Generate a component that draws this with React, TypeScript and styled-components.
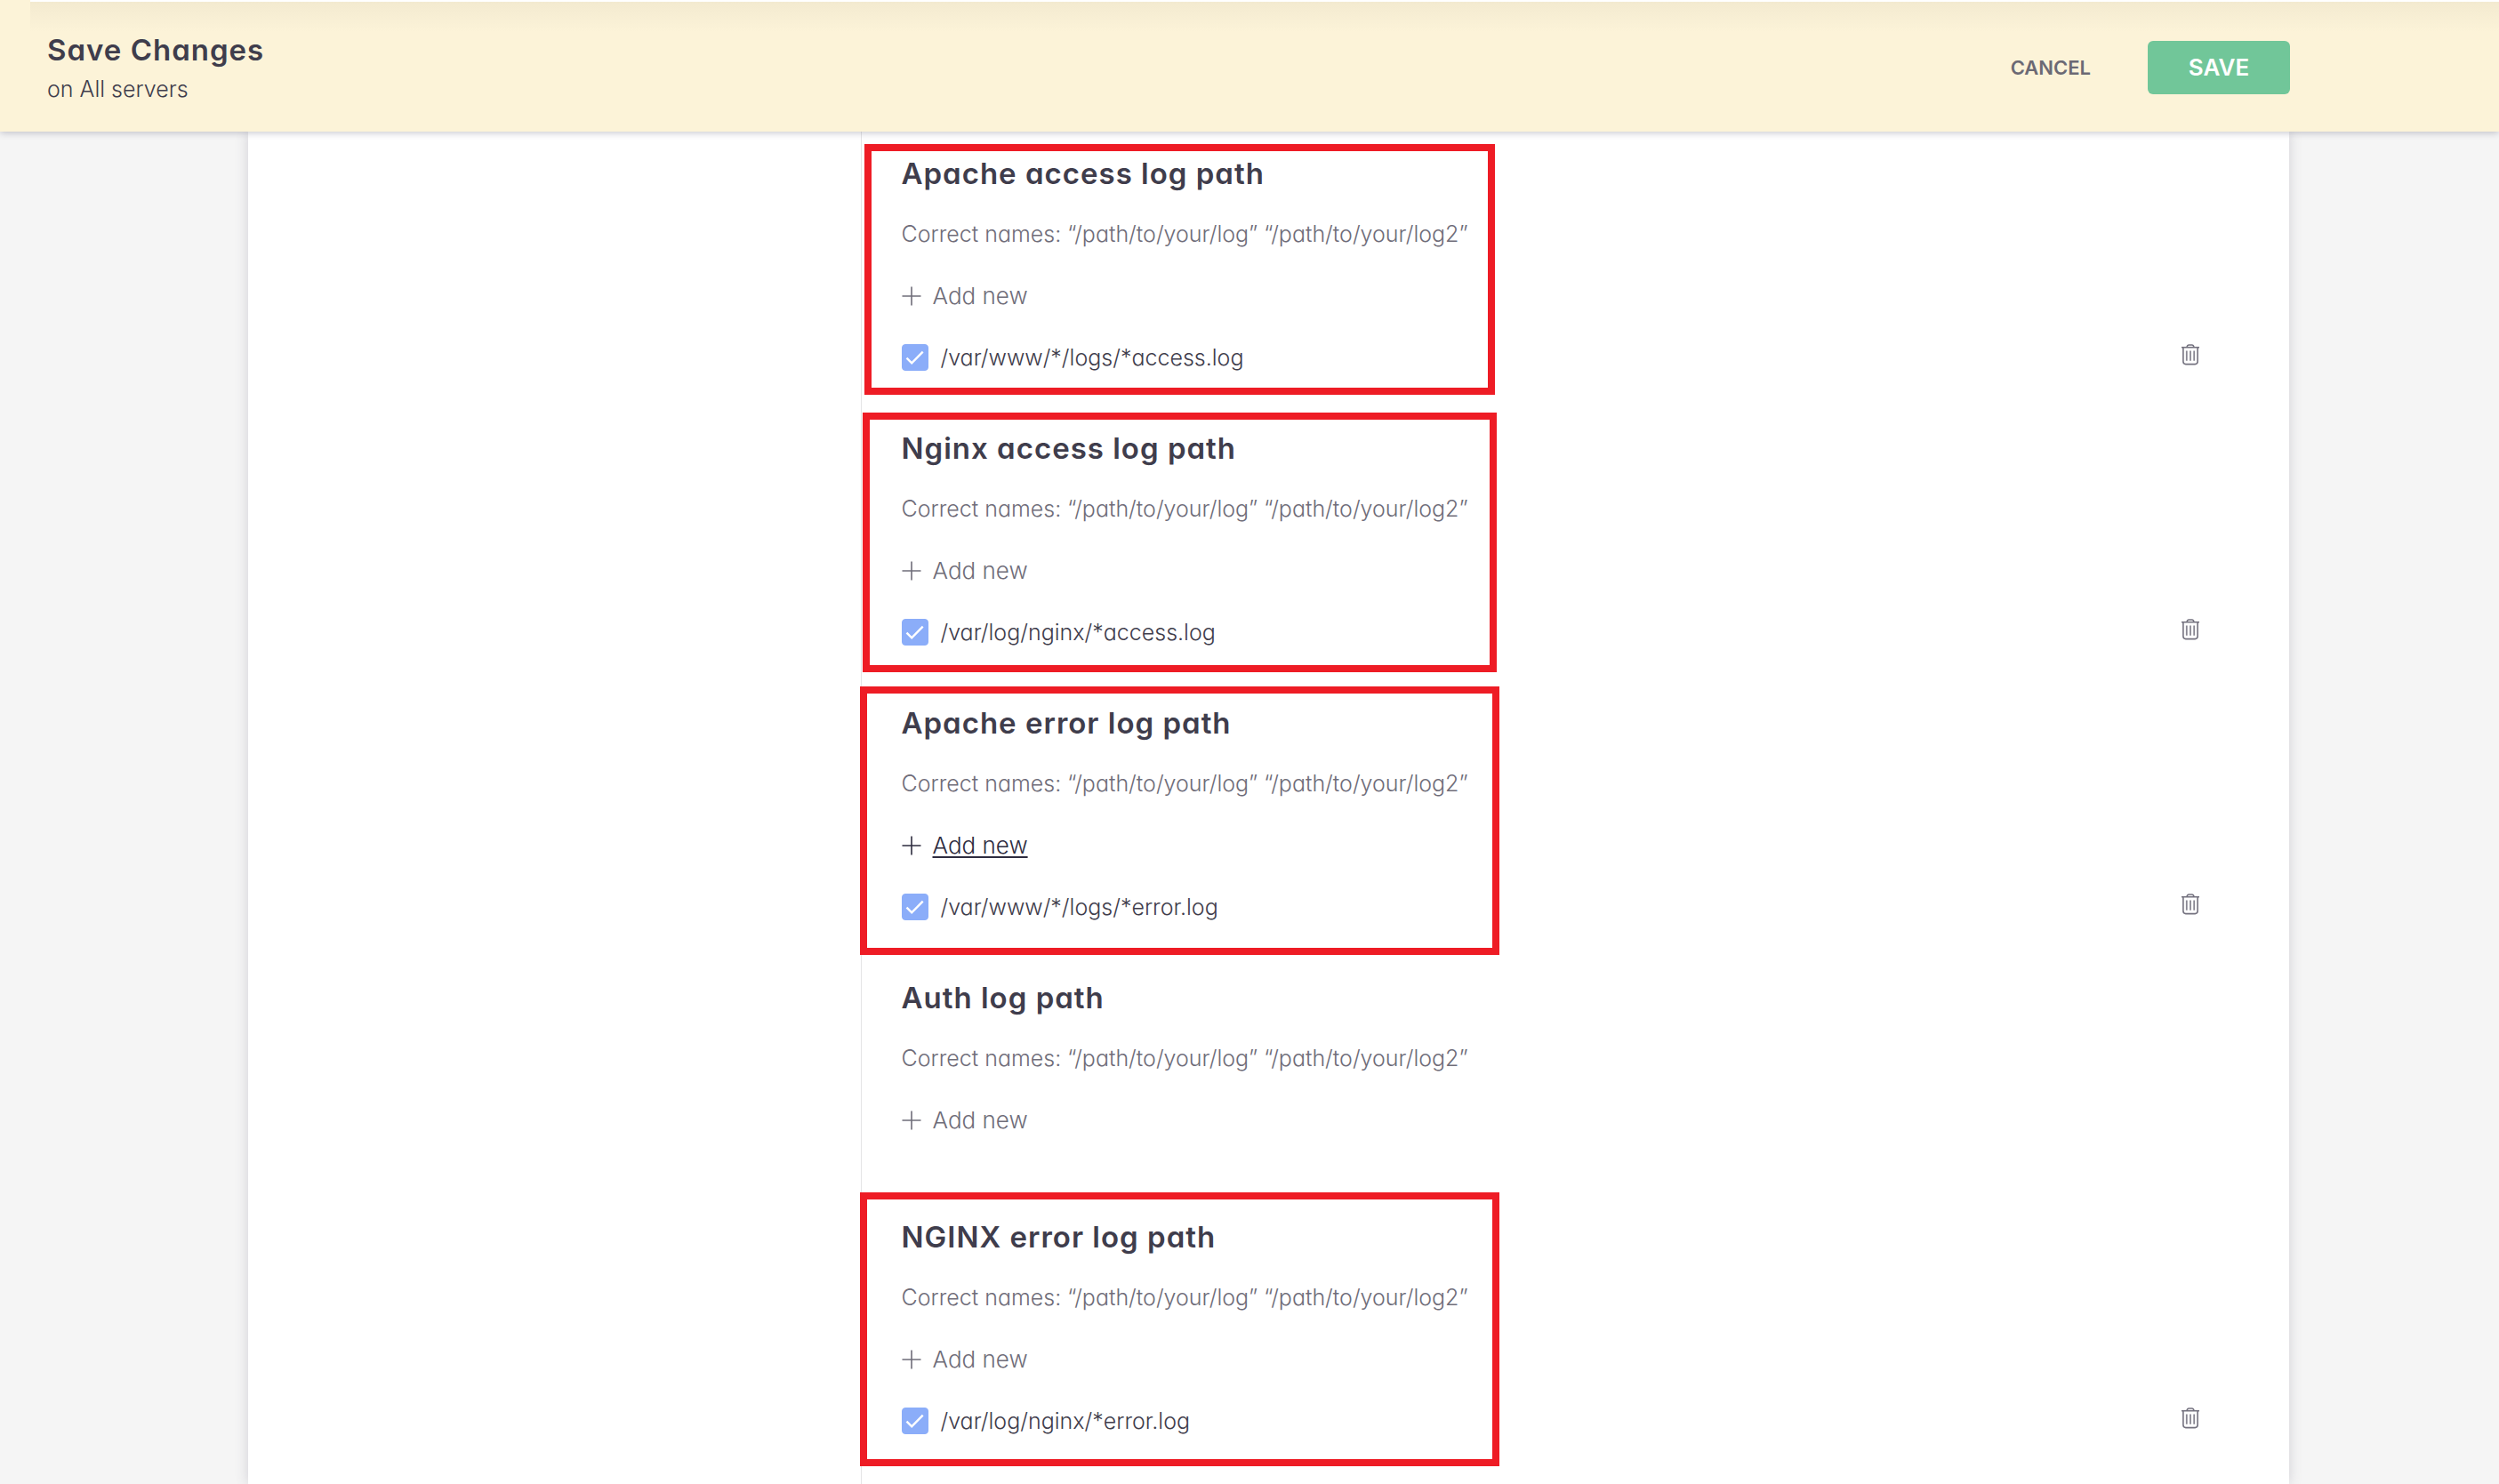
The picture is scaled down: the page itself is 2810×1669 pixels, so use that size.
import React, { useState } from 'react';
import styled, { createGlobalStyle } from 'styled-components';

const GlobalStyle = createGlobalStyle`
  *, *::before, *::after {
    box-sizing: border-box;
  }

  body {
    margin: 0;
    background: #f5f5f5;
    color: #3f3d4c;
    font-family: Inter, 'Open Sans', sans-serif;
    font-size: 25px;
    font-weight: 350;
    line-height: 32px;
    font-feature-settings: 'cv11';
  }

  button {
    padding: 0;
    border: 0;
    background: none;
    font: inherit;
    font-feature-settings: inherit;
    cursor: pointer;
  }
`;

const Page = styled.div`
  display: flex;
  flex-direction: column;
  min-height: 100vh;
`;

const Header = styled.header`
  position: relative;
  z-index: 1;
  display: flex;
  justify-content: space-between;
  align-items: flex-start;
  padding: 36px 235px 32px 53px;
  background: #fcf3d8;
  box-shadow: 0 1px 8px rgba(63, 61, 90, 0.32);

  &::before {
    content: '';
    position: absolute;
    top: 0;
    right: 0;
    left: 34px;
    height: 36px;
    border-top: 2px solid #fff;
    background: linear-gradient(#f3ead0, #fcf3d8);
  }
`;

const HeaderText = styled.div`
  position: relative;
  display: grid;
  gap: 8px;
`;

const HeaderTitle = styled.h1`
  margin: 0;
  font-size: 33px;
  font-weight: 600;
  line-height: 40px;
  letter-spacing: 1px;
`;

const HeaderNote = styled.p`
  margin: 0;
`;

const Actions = styled.div`
  display: flex;
  align-items: center;
  gap: 64px;
  margin-top: 10px;
`;

const CancelButton = styled.button`
  color: #6b6974;
  font-size: 22px;
  font-weight: 600;
`;

const SaveButton = styled.button`
  width: 160px;
  height: 60px;
  border-radius: 6px;
  background: #71c699;
  color: #fff;
  font-size: 26px;
  font-weight: 600;
`;

const Body = styled.div`
  display: flex;
  flex: 1;
  padding: 0 236px 0 279px;
`;

const Card = styled.div`
  display: grid;
  flex: 1;
  grid-template-columns: 30% 1fr;
  background: #fff;
  box-shadow: 0 0 14px rgba(63, 61, 90, 0.2);
`;

const Settings = styled.main`
  grid-column: 2;
  padding: 27px 101px 0 45px;
  border-left: 1px solid #e4e4e6;
`;

const Section = styled.section`
  position: relative;
  padding-bottom: 66px;

  &:last-child {
    padding-bottom: 40px;
  }
`;

const SectionTitle = styled.h2`
  margin: 0 0 32px;
  font-size: 33px;
  font-weight: 600;
  line-height: 40px;
  letter-spacing: 1px;
`;

const Hint = styled.p`
  margin: 0 0 38px;
  color: #6f6d79;
`;

const AddButton = styled.button<{ $active?: boolean }>`
  display: flex;
  align-items: center;
  gap: 13px;
  color: ${({ $active }) => ($active ? '#2e2c3f' : '#6f6d79')};
  font-size: 26px;

  span {
    text-decoration: ${({ $active }) => ($active ? 'underline' : 'none')};
    text-decoration-thickness: 2px;
    text-underline-offset: 3px;
    text-decoration-skip-ink: none;
  }
`;

const PathList = styled.ul`
  min-height: 29px;
  margin: 0;
  padding: 0;
  list-style: none;
`;

const PathRow = styled.li`
  display: flex;
  justify-content: space-between;
  align-items: flex-start;
  padding-top: 37px;
`;

const PathLabel = styled.label`
  display: flex;
  align-items: center;
  gap: 14px;
`;

const CheckboxCell = styled.span`
  display: grid;

  > * {
    grid-area: 1 / 1;
  }

  svg {
    pointer-events: none;
  }
`;

const Checkbox = styled.input`
  appearance: none;
  width: 30px;
  height: 30px;
  margin: 0;
  border: 1px solid #8badf9;
  border-radius: 4px;

  &:checked {
    background: #8badf9;
  }
`;

const DeleteButton = styled.button`
  display: flex;
  padding-top: 1px;
  color: #74727f;
`;

const Frame = styled.div<{ $top: number; $left: number; $width: number; $height: number }>`
  position: absolute;
  top: ${({ $top }) => $top}px;
  left: ${({ $left }) => $left}px;
  width: ${({ $width }) => $width}px;
  height: ${({ $height }) => $height}px;
  border: 8px solid #ee1c25;
  pointer-events: none;
`;

const PlusIcon = () => (
  <svg width="22" height="22" viewBox="0 0 22 22" fill="none" stroke="currentColor" strokeWidth="1.6" aria-hidden="true">
    <path d="M11 0.5V21.5M0.5 11H21.5" />
  </svg>
);

const CheckIcon = () => (
  <svg width="30" height="30" viewBox="0 0 30 30" fill="none" stroke="#fff" strokeWidth="2.4" aria-hidden="true">
    <path d="M5.5 15.7L11.2 21.3L23.7 8.7" />
  </svg>
);

const TrashIcon = () => (
  <svg width="20" height="24" viewBox="0 0 20 24" fill="none" stroke="currentColor" aria-hidden="true">
    <path d="M0 3.7H20" strokeWidth="1.6" />
    <path d="M6 3.5C6.4 1.4 7 0.9 8.2 0.9H11.8C13 0.9 13.6 1.4 14 3.5" strokeWidth="1.5" />
    <path d="M1.9 4V19.6C1.9 21.7 2.9 22.6 4.8 22.6H15.2C17.1 22.6 18.1 21.7 18.1 19.6V4" strokeWidth="1.6" />
    <path d="M5.8 7.5V18.8M10 7.5V18.8M14.2 7.5V18.8" strokeWidth="1.8" opacity="0.85" />
  </svg>
);

type FrameBox = { top: number; left: number; width: number; height: number };
type LogSection = { title: string; paths: string[]; active?: boolean; frame?: FrameBox };

const sections: LogSection[] = [
  {
    title: 'Apache access log path',
    paths: ['/var/www/*/logs/*access.log'],
    frame: { top: -13, left: -42, width: 709, height: 282 },
  },
  {
    title: 'Nginx access log path',
    paths: ['/var/log/nginx/*access.log'],
    frame: { top: -20, left: -44, width: 713, height: 292 },
  },
  {
    title: 'Apache error log path',
    paths: ['/var/www/*/logs/*error.log'],
    active: true,
    frame: { top: -21, left: -47, width: 719, height: 302 },
  },
  { title: 'Auth log path', paths: [] },
  {
    title: 'NGINX error log path',
    paths: ['/var/log/nginx/*error.log'],
    frame: { top: -30, left: -47, width: 719, height: 308 },
  },
];

function LogPath({ path }: { path: string }) {
  const [checked, setChecked] = useState(true);
  return (
    <PathRow>
      <PathLabel>
        <CheckboxCell>
          <Checkbox type="checkbox" checked={checked} onChange={(e) => setChecked(e.target.checked)} />
          {checked && <CheckIcon />}
        </CheckboxCell>
        {path}
      </PathLabel>
      <DeleteButton type="button" aria-label={`Delete ${path}`}>
        <TrashIcon />
      </DeleteButton>
    </PathRow>
  );
}

export default function App() {
  return (
    <Page>
      <GlobalStyle />
      <Header>
        <HeaderText>
          <HeaderTitle>Save Changes</HeaderTitle>
          <HeaderNote>on All servers</HeaderNote>
        </HeaderText>
        <Actions>
          <CancelButton type="button">CANCEL</CancelButton>
          <SaveButton type="button">SAVE</SaveButton>
        </Actions>
      </Header>
      <Body>
        <Card>
          <Settings>
            {sections.map(({ title, paths, active, frame }) => (
              <Section key={title}>
                <SectionTitle>{title}</SectionTitle>
                <Hint>Correct names: “/path/to/your/log” “/path/to/your/log2”</Hint>
                <AddButton type="button" $active={active}>
                  <PlusIcon />
                  <span>Add new</span>
                </AddButton>
                <PathList>
                  {paths.map((path) => (
                    <LogPath key={path} path={path} />
                  ))}
                </PathList>
                {frame && (
                  <Frame $top={frame.top} $left={frame.left} $width={frame.width} $height={frame.height} />
                )}
              </Section>
            ))}
          </Settings>
        </Card>
      </Body>
    </Page>
  );
}
